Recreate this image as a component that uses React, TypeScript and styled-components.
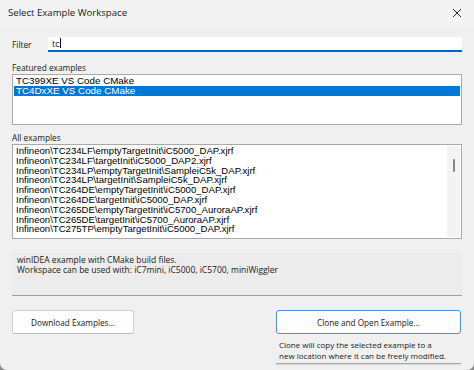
import styled, { createGlobalStyle } from 'styled-components';

const GlobalStyle = createGlobalStyle`
  html, body {
    margin: 0;
    padding: 0;
    background: #8a8a8a;
  }
  * { box-sizing: border-box; }
`

const Window = styled.div`
    width: 474px;
    height: 370px;
    background: #f0f0f0;
    border-radius: 0 0 7px 7px;
    overflow: hidden;
    display: flex;
    flex-direction: column;
    font-family: "Open Sans", "Noto Sans", sans-serif;
    color: #1a1a1a;
`
const TitleBar = styled.div`
    height: 26px;
    display: flex;
    align-items: center;
    justify-content: space-between;
    padding: 0 8px 1px 8px;
    background: #f3f3f3;
    font-size: 9.6px;
`
const Close = styled.div`
    width: 10px;
    height: 10px;
    margin-right: 4px;
    display: flex;
`
const Body = styled.div`
    display: flex;
    flex-direction: column;
    padding: 10px 12px 0 12px;
`
const FilterRow = styled.div`
    display: flex;
    align-items: center;
    height: 16px;
`
const Label = styled.div<{ $top?: number }>`
    font-size: 8.3px;
    line-height: 11px;
    margin-top: ${p => p.$top ?? 0}px;
    margin-bottom: 1px;
`
const FilterLabel = styled(Label)`
    width: 36px;
    margin: 0;
`
const FilterInput = styled.div`
    flex: 1;
    height: 15px;
    background: #fff;
    border-bottom: 2px solid #0067c0;
    border-radius: 2px 2px 0 0;
    font-size: 9px;
    padding-left: 4px;
    display: flex;
    align-items: center;
`
const Caret = styled.span`
    display: inline-block;
    width: 1px;
    height: 10px;
    background: #000;
    margin-left: 0.5px;
`
const ListBox = styled.div<{ $h: number }>`
    height: ${p => p.$h}px;
    background: #fff;
    border: 1px solid #a9a9a9;
    display: flex;
    padding: 1px;
`
const Rows = styled.div`
    flex: 1;
    display: flex;
    flex-direction: column;
`
const Row = styled.div<{ $selected?: boolean; $size: number }>`
    height: 9.8px;
    line-height: 9.8px;
    padding-left: 2px;
    font-family: "Liberation Sans", Arial, sans-serif;
    font-size: ${p => p.$size}px;
    white-space: nowrap;
    background: ${p => (p.$selected ? '#0078d7' : 'transparent')};
    color: ${p => (p.$selected ? '#fff' : '#000')};
`
const ScrollBar = styled.div`
    width: 13px;
    background: #f3f3f3;
    display: flex;
    justify-content: center;
    padding-top: 13px;
`
const Thumb = styled.div`
    width: 2px;
    height: 13px;
    background: #858585;
    border-radius: 1px;
`
const Description = styled.div`
    margin-top: 14px;
    height: 43px;
    background: #ececec;
    border-bottom: 1px solid #a0a0a0;
    padding: 2px 5px;
    font-size: 8.5px;
    line-height: 9.5px;
`
const Footer = styled.div`
    display: flex;
    justify-content: space-between;
    align-items: flex-start;
    margin-top: 14px;
    padding-right: 1px;
`
const Button = styled.div<{ $w: number; $primary?: boolean }>`
    width: ${p => p.$w}px;
    height: 24px;
    background: #fdfdfd;
    border: 1px solid ${p => (p.$primary ? '#4d8fd6' : '#d0d0d0')};
    border-bottom-color: ${p => (p.$primary ? '#4d8fd6' : '#bdbdbd')};
    border-radius: 3px;
    display: flex;
    align-items: center;
    justify-content: center;
    font-size: 8.2px;
`
const CloneCol = styled.div`
    display: flex;
    flex-direction: column;
    width: 185px;
`
const Note = styled.div`
    margin-top: 3px;
    height: 27px;
    padding: 2px 3px;
    border-bottom: 1px solid #a6a6a6;
    box-shadow: 0 1px 1px rgba(0, 0, 0, 0.08);
    font-size: 8px;
    line-height: 11px;
`

const featured = ['TC399XE VS Code CMake', 'TC4DxXE VS Code CMake']

const all = [
    'Infineon\\TC234LF\\emptyTargetInit\\iC5000_DAP.xjrf',
    'Infineon\\TC234LF\\targetInit\\iC5000_DAP2.xjrf',
    'Infineon\\TC234LP\\emptyTargetInit\\SampleiC5k_DAP.xjrf',
    'Infineon\\TC234LP\\targetInit\\SampleiC5k_DAP.xjrf',
    'Infineon\\TC264DE\\emptyTargetInit\\iC5000_DAP.xjrf',
    'Infineon\\TC264DE\\targetInit\\iC5000_DAP.xjrf',
    'Infineon\\TC265DE\\emptyTargetInit\\iC5700_AuroraAP.xjrf',
    'Infineon\\TC265DE\\targetInit\\iC5700_AuroraAP.xjrf',
    'Infineon\\TC275TP\\emptyTargetInit\\iC5000_DAP.xjrf',
]

const App = () => {
    return (
        <Window>
            <GlobalStyle />
            <TitleBar>
                <span>Select Example Workspace</span>
                <Close>
                    <svg width="10" height="10" viewBox="0 0 10 10">
                        <path d="M1 1 L9 9 M9 1 L1 9" stroke="#222" strokeWidth="1" />
                    </svg>
                </Close>
            </TitleBar>
            <Body>
                <FilterRow>
                    <FilterLabel>Filter</FilterLabel>
                    <FilterInput>tc<Caret /></FilterInput>
                </FilterRow>
                <Label $top={10}>Featured examples</Label>
                <ListBox $h={51}>
                    <Rows>
                        {featured.map((f, i) => (
                            <Row key={f} $size={9.8} $selected={i === 1}>{f}</Row>
                        ))}
                    </Rows>
                </ListBox>
                <Label $top={7}>All examples</Label>
                <ListBox $h={95}>
                    <Rows>
                        {all.map(a => (
                            <Row key={a} $size={9.6}>{a}</Row>
                        ))}
                    </Rows>
                    <ScrollBar>
                        <Thumb />
                    </ScrollBar>
                </ListBox>
                <Description>
                    winIDEA example with CMake build files.<br />
                    Workspace can be used with: iC7mini, iC5000, iC5700, miniWiggler
                </Description>
                <Footer>
                    <Button $w={122}>Download Examples...</Button>
                    <CloneCol>
                        <Button $w={185} $primary>Clone and Open Example...</Button>
                        <Note>
                            Clone will copy the selected example to a<br />
                            new location where it can be freely modified.
                        </Note>
                    </CloneCol>
                </Footer>
            </Body>
        </Window>
    )
}

export default App
